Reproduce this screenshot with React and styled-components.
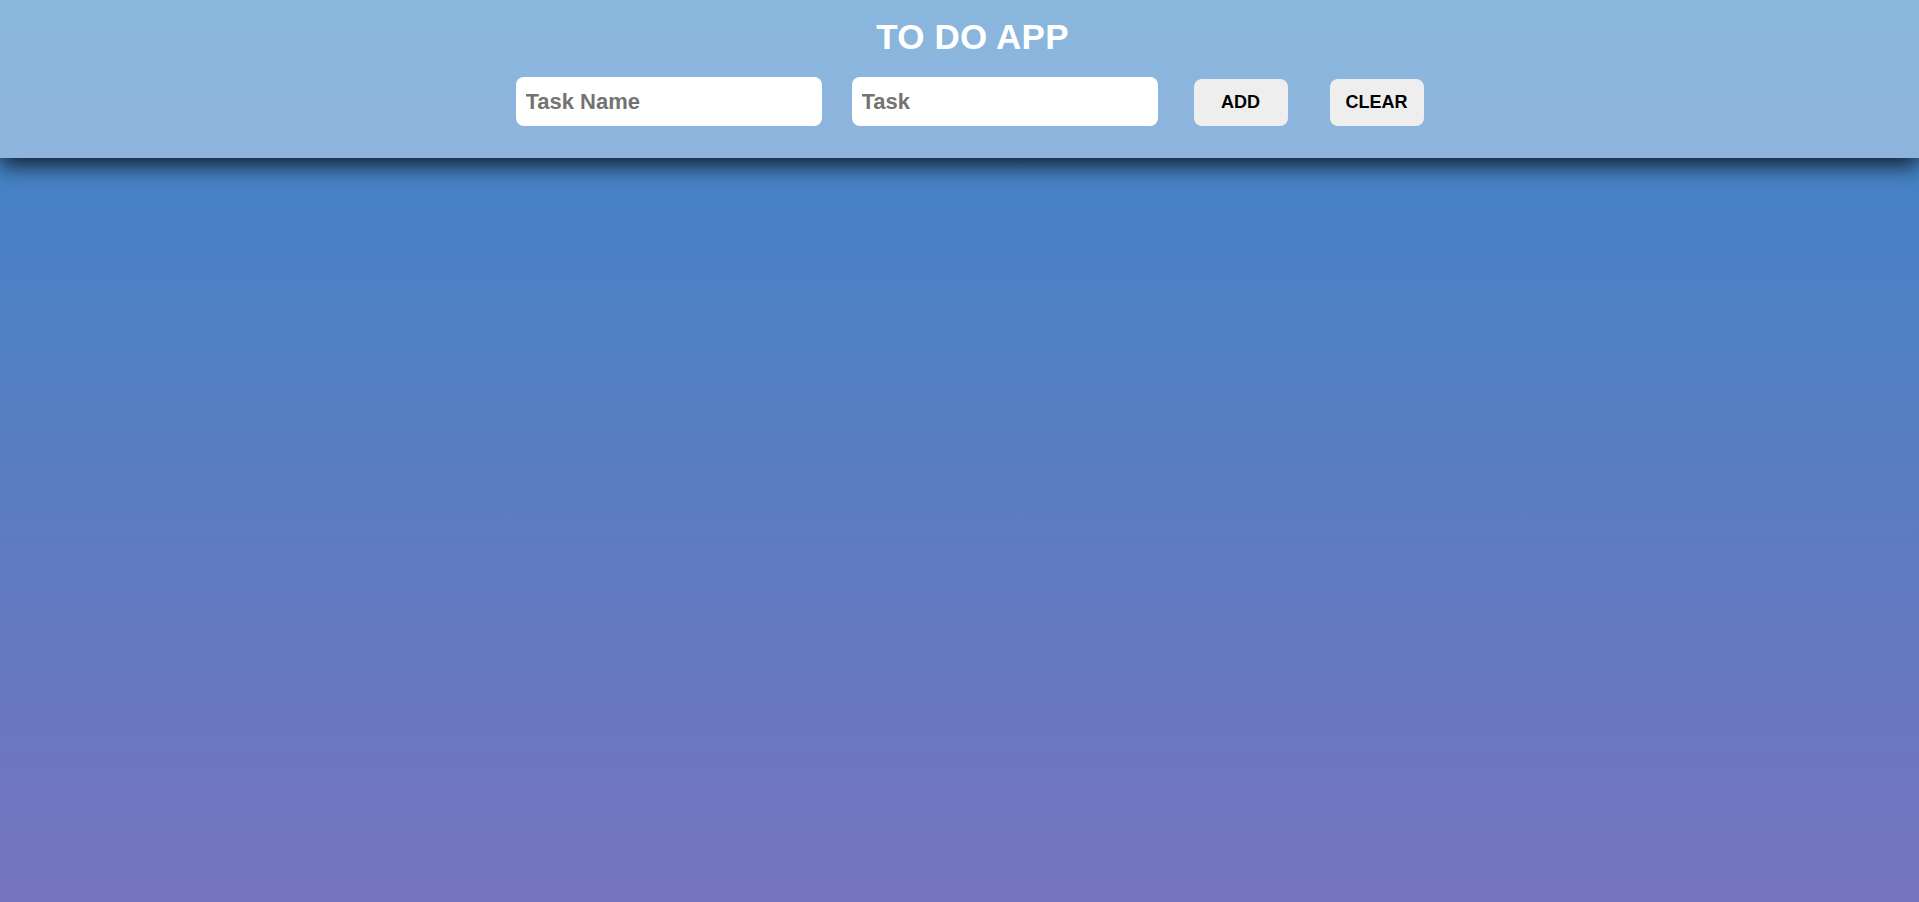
import React from "react";
import styled, { createGlobalStyle } from "styled-components";

const GlobalStyle = createGlobalStyle`
  html, body { margin: 0; padding: 0; }
  body { font-family: "Liberation Sans", Arial, sans-serif; }
  * { box-sizing: border-box; }
`;

const Page = styled.div`
  min-height: 100vh;
  background: linear-gradient(180deg, #3a86c7 0%, #7674be 100%);
`;

const Header = styled.header`
  background: rgba(255, 255, 255, 0.4);
  box-shadow: 0 8px 20px rgba(0, 0, 0, 0.75);
  padding: 17px 0 32px 26px;
  display: flex;
  flex-direction: column;
  align-items: center;
`;

const Title = styled.h1`
  margin: 0;
  font-family: "Liberation Sans", Arial, sans-serif;
  font-weight: 700;
  font-size: 35px;
  line-height: 40px;
  color: #ffffff;
  letter-spacing: 0.2px;
`;

const Form = styled.form`
  display: flex;
  align-items: flex-end;
  margin-top: 20px;
`;

const Input = styled.input`
  width: 306px;
  height: 49px;
  margin: 0 15px;
  border: none;
  border-radius: 8px;
  background: #ffffff;
  padding: 0 10px;
  font-family: "Liberation Sans", Arial, sans-serif;
  font-weight: 700;
  font-size: 22px;
  color: #222;
  outline: none;
  &::placeholder { color: #737373; }
`;

const Button = styled.button`
  width: 94px;
  height: 47px;
  margin: 0 21px;
  border: none;
  border-radius: 8px;
  background: #eeeeee;
  color: #000;
  font-family: "Liberation Sans", Arial, sans-serif;
  font-weight: 700;
  font-size: 18px;
  cursor: pointer;
  padding: 0;
`;

export default function App() {
  return (
    <>
      <GlobalStyle />
      <Page>
        <Header>
          <Title>TO DO APP</Title>
          <Form onSubmit={(e) => e.preventDefault()}>
            <Input type="text" placeholder="Task Name" />
            <Input type="text" placeholder="Task" />
            <Button type="submit">ADD</Button>
            <Button type="button">CLEAR</Button>
          </Form>
        </Header>
      </Page>
    </>
  );
}
